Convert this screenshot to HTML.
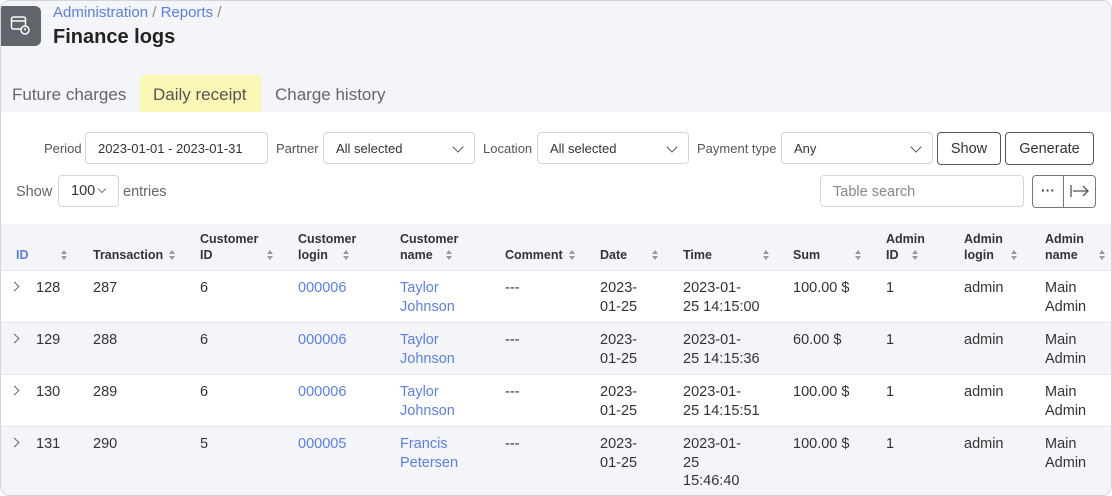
<!DOCTYPE html>
<html><head><meta charset="utf-8"><style>
*{box-sizing:border-box;margin:0;padding:0}
body{width:1112px;height:496px;background:#fff;font-family:"Liberation Sans",sans-serif;color:#333;overflow:hidden;position:relative}
.frame{position:absolute;left:0;top:0;width:1112px;height:496px;border-radius:10px;overflow:hidden;background:#f4f5f9}
.bord{position:absolute;left:0;top:0;width:1112px;height:496px;border:1px solid #d4d6dc;border-radius:10px;pointer-events:none}
.a{position:absolute;white-space:nowrap}
.lnk{color:#5b7fe8}
.inp{position:absolute;height:32px;border:1px solid #d3d6dc;border-radius:4px;background:#fff;font-size:13px;padding:8px 0 0 12px;color:#333}
.chev{position:absolute;right:12px;top:10px;width:8px;height:8px;border-right:1.3px solid #555;border-bottom:1.3px solid #555;transform:rotate(45deg)}
.lbl{font-size:13px;color:#555}
.btn{position:absolute;height:33px;border:1px solid #555;border-radius:4px;background:#fff;font-size:14.5px;text-align:center;padding-top:8px;color:#333}
.th{position:absolute;font-size:12.5px;font-weight:bold;color:#333;line-height:16px}
.srt{position:absolute;width:6px;height:10px}
.srt:before{content:"";position:absolute;left:0;top:0;border-left:3.5px solid transparent;border-right:3.5px solid transparent;border-bottom:4px solid #999}
.srt:after{content:"";position:absolute;left:0;top:6px;border-left:3.5px solid transparent;border-right:3.5px solid transparent;border-top:4px solid #999}
.row{position:absolute;left:0;width:1112px;border-top:1px solid #e2e4e9}
.c{position:absolute;font-size:14.5px;line-height:18.5px;color:#333}
.c.lnk{color:#5b7fe8}
.rc{position:absolute;left:11px;width:7px;height:7px;border-right:1.3px solid #666;border-top:1.3px solid #666;transform:rotate(45deg)}
</style></head><body><div class="frame">
<div class="a" style="left:0;top:6px;width:41px;height:40px;background:#60646b;border-radius:0 6px 6px 0"></div>
<svg class="a" style="left:10px;top:15px" width="22" height="22" viewBox="0 0 22 22" fill="none" stroke="#fff" stroke-width="1.5"><rect x="1.5" y="2" width="14" height="12" rx="2"/><path d="M1.5 6h14"/><circle cx="15" cy="15" r="4" fill="#60646b"/><path d="M15 13v2.5"/></svg>
<div class="a" style="left:53px;top:4px;font-size:15px;color:#888"><span class="lnk">Administration</span> / <span class="lnk">Reports</span> /</div>
<div class="a" style="left:53px;top:26px;font-size:20px;font-weight:bold;color:#222">Finance logs</div>
<div class="a" style="left:140px;top:75px;width:121px;height:37px;background:#fbf8b5;border-radius:4px 4px 0 0"></div>
<div class="a" style="left:12px;top:85px;font-size:17px;color:#666">Future charges</div>
<div class="a" style="left:153px;top:85px;font-size:17px;color:#555">Daily receipt</div>
<div class="a" style="left:275px;top:85px;font-size:17px;color:#666">Charge history</div>
<div class="a" style="left:0;top:112px;width:1112px;height:112px;background:#fff"></div>
<div class="a lbl" style="left:44px;top:141px">Period</div>
<div class="inp" style="left:85px;top:132px;width:183px">2023-01-01 - 2023-01-31</div>
<div class="a lbl" style="left:276px;top:141px">Partner</div>
<div class="inp" style="left:323px;top:132px;width:152px">All selected<div class="chev"></div></div>
<div class="a lbl" style="left:483px;top:141px">Location</div>
<div class="inp" style="left:537px;top:132px;width:152px">All selected<div class="chev"></div></div>
<div class="a lbl" style="left:697px;top:141px">Payment type</div>
<div class="inp" style="left:781px;top:132px;width:152px">Any<div class="chev"></div></div>
<div class="btn" style="left:937px;top:132px;width:64px">Show</div>
<div class="btn" style="left:1005px;top:132px;width:89px">Generate</div>
<div class="a" style="left:16px;top:184px;font-size:14.5px;color:#666">Show</div>
<div class="inp" style="left:58px;top:175px;width:61px;font-size:14.5px;padding-top:7px">100<div class="chev" style="width:6px;height:6px;right:13px;top:10px;border-color:#777"></div></div>
<div class="a" style="left:123px;top:184px;font-size:14.5px;color:#666">entries</div>
<div class="inp" style="left:820px;top:175px;width:204px;font-size:14.5px;color:#888;padding-top:8px">Table search</div>
<div class="btn" style="left:1032px;top:175px;width:64px;border-color:#777"></div>
<div class="a" style="left:1063px;top:176px;width:1px;height:31px;background:#777"></div>
<div class="a" style="left:1041px;top:182px;font-size:14px;font-weight:bold;color:#444">···</div>
<svg class="a" style="left:1070px;top:184px" width="20" height="14" viewBox="0 0 20 14" fill="none" stroke="#555" stroke-width="1.3"><path d="M1 1v12M3 7h15M13 2l5 5-5 5"/></svg>
<div class="a" style="left:0;top:224px;width:1112px;height:46px;background:#f4f5f9"></div>
<div class="th" style="left:16px;top:247px;color:#5b7fe8">ID</div><div class="srt" style="left:61px;top:250px"></div>
<div class="th" style="left:93px;top:247px">Transaction</div><div class="srt" style="left:169px;top:250px"></div>
<div class="th" style="left:200px;top:231px">Customer<br>ID</div><div class="srt" style="left:267px;top:250px"></div>
<div class="th" style="left:298px;top:231px">Customer<br>login</div><div class="srt" style="left:343px;top:250px"></div>
<div class="th" style="left:400px;top:231px">Customer<br>name</div><div class="srt" style="left:446px;top:250px"></div>
<div class="th" style="left:505px;top:247px">Comment</div><div class="srt" style="left:569px;top:250px"></div>
<div class="th" style="left:600px;top:247px">Date</div><div class="srt" style="left:652px;top:250px"></div>
<div class="th" style="left:683px;top:247px">Time</div><div class="srt" style="left:763px;top:250px"></div>
<div class="th" style="left:793px;top:247px">Sum</div><div class="srt" style="left:855px;top:250px"></div>
<div class="th" style="left:886px;top:231px">Admin<br>ID</div><div class="srt" style="left:912px;top:250px"></div>
<div class="th" style="left:964px;top:231px">Admin<br>login</div><div class="srt" style="left:1011px;top:250px"></div>
<div class="th" style="left:1045px;top:231px">Admin<br>name</div><div class="srt" style="left:1099px;top:250px"></div>

<div class="row" style="top:270px;height:53px;background:#fff"></div>
<div class="row" style="top:322px;height:53px;background:#f4f5f9"></div>
<div class="row" style="top:374px;height:53px;background:#fff"></div>
<div class="row" style="top:426px;height:70px;background:#f4f5f9"></div>

<div class="rc" style="top:283px"></div><div class="rc" style="top:335px"></div><div class="rc" style="top:387px"></div><div class="rc" style="top:439px"></div>

<div class="c" style="left:36px;top:279px">128</div><div class="c" style="left:93px;top:279px">287</div><div class="c" style="left:200px;top:279px">6</div><div class="c lnk" style="left:298px;top:279px">000006</div><div class="c lnk" style="left:400px;top:279px">Taylor<br>Johnson</div><div class="c" style="left:505px;top:279px">---</div><div class="c" style="left:600px;top:279px">2023-<br>01-25</div><div class="c" style="left:683px;top:279px">2023-01-<br>25 14:15:00</div><div class="c" style="left:793px;top:279px">100.00 $</div><div class="c" style="left:886px;top:279px">1</div><div class="c" style="left:964px;top:279px">admin</div><div class="c" style="left:1045px;top:279px">Main<br>Admin</div>

<div class="c" style="left:36px;top:331px">129</div><div class="c" style="left:93px;top:331px">288</div><div class="c" style="left:200px;top:331px">6</div><div class="c lnk" style="left:298px;top:331px">000006</div><div class="c lnk" style="left:400px;top:331px">Taylor<br>Johnson</div><div class="c" style="left:505px;top:331px">---</div><div class="c" style="left:600px;top:331px">2023-<br>01-25</div><div class="c" style="left:683px;top:331px">2023-01-<br>25 14:15:36</div><div class="c" style="left:793px;top:331px">60.00 $</div><div class="c" style="left:886px;top:331px">1</div><div class="c" style="left:964px;top:331px">admin</div><div class="c" style="left:1045px;top:331px">Main<br>Admin</div>

<div class="c" style="left:36px;top:383px">130</div><div class="c" style="left:93px;top:383px">289</div><div class="c" style="left:200px;top:383px">6</div><div class="c lnk" style="left:298px;top:383px">000006</div><div class="c lnk" style="left:400px;top:383px">Taylor<br>Johnson</div><div class="c" style="left:505px;top:383px">---</div><div class="c" style="left:600px;top:383px">2023-<br>01-25</div><div class="c" style="left:683px;top:383px">2023-01-<br>25 14:15:51</div><div class="c" style="left:793px;top:383px">100.00 $</div><div class="c" style="left:886px;top:383px">1</div><div class="c" style="left:964px;top:383px">admin</div><div class="c" style="left:1045px;top:383px">Main<br>Admin</div>

<div class="c" style="left:36px;top:435px">131</div><div class="c" style="left:93px;top:435px">290</div><div class="c" style="left:200px;top:435px">5</div><div class="c lnk" style="left:298px;top:435px">000005</div><div class="c lnk" style="left:400px;top:435px">Francis<br>Petersen</div><div class="c" style="left:505px;top:435px">---</div><div class="c" style="left:600px;top:435px">2023-<br>01-25</div><div class="c" style="left:683px;top:435px">2023-01-<br>25<br>15:46:40</div><div class="c" style="left:793px;top:435px">100.00 $</div><div class="c" style="left:886px;top:435px">1</div><div class="c" style="left:964px;top:435px">admin</div><div class="c" style="left:1045px;top:435px">Main<br>Admin</div>
</div><div class="bord"></div></body></html>
